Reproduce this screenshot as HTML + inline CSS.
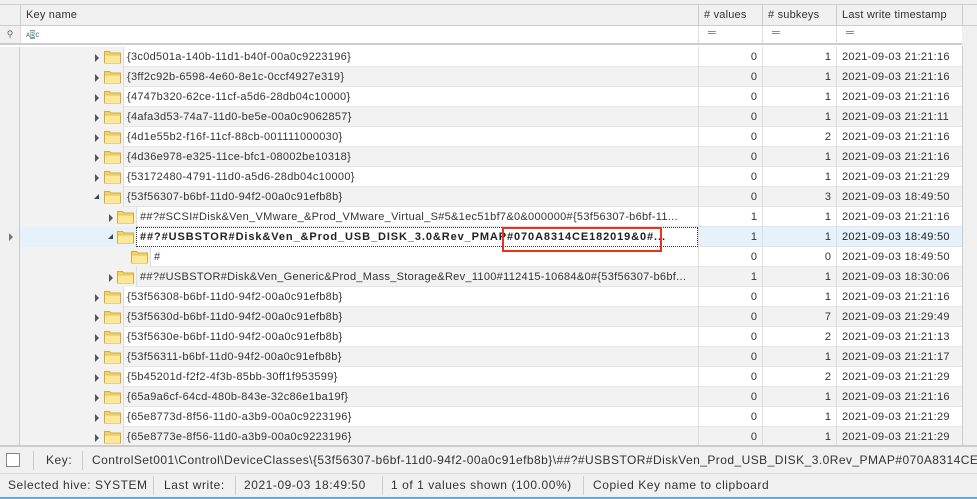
<!DOCTYPE html><html><head><style>
*{margin:0;padding:0;box-sizing:border-box}
body{width:977px;height:499px;overflow:hidden;background:#fff;font-family:"Liberation Sans",Tahoma,sans-serif;font-size:11px;color:#333;position:relative}
.a{position:absolute}
.hdr{top:4px;height:22px;background:#f0f0f0;border-top:1px solid #ccc;border-bottom:1px solid #ccc}
.hc{position:absolute;top:0;height:21px;line-height:21px;padding-left:5px;border-left:1px solid #ccc;color:#333;white-space:nowrap;letter-spacing:0.2px}
.flt{top:26px;height:19px;background:#fff;border-bottom:2px solid #ccc}
.fc{position:absolute;top:0;height:17px;border-left:1px solid #ddd;padding-left:9px;line-height:15px;color:#666}
.row{position:absolute;left:20px;width:942px;height:20px}
.cell{position:absolute;top:0;height:20px;line-height:20px;border-left:1px solid #ddd;border-bottom:1px solid #e4e4e4;white-space:nowrap;overflow:hidden}
.num{text-align:right;padding-right:5px}
.ts{padding-left:5px;letter-spacing:0.3px}
.arr{position:absolute;top:7px;width:0;height:0;border-top:4px solid transparent;border-bottom:4px solid transparent;border-left:4px solid #555}
.exp{position:absolute;top:7px;width:0;height:0;border-left:5px solid transparent;border-bottom:5px solid #444}
.fold{position:absolute;top:3px}
.name{position:absolute;top:0;height:20px;line-height:20px;padding-left:3px;border-left:1px solid #ddd;border-bottom:1px solid #e4e4e4;white-space:nowrap;overflow:hidden;letter-spacing:0.3px}
.sb{letter-spacing:0.55px}
</style></head><body>
<div class="a" style="left:0;top:0;width:977px;height:4px;background:#f0f0f0"></div>
<div class="a hdr" style="left:0;width:977px">
<div class="hc" style="left:20px;width:678px">Key name</div>
<div class="hc" style="left:698px;width:64px"># values</div>
<div class="hc" style="left:762px;width:74px"># subkeys</div>
<div class="hc" style="left:836px;width:126px">Last write timestamp</div>
<div class="hc" style="left:962px;width:15px"></div>
</div>
<div class="a flt" style="left:0;width:962px">
<div class="a" style="left:0;top:0;width:20px;height:17px;background:#f0f0f0;color:#666;font-size:9px;text-align:center;line-height:17px">⚲</div>
<div class="fc" style="left:20px;width:678px;padding-left:5px;font-size:8px;line-height:17px">ᴀ<span style="background:#7aa;color:#fff">B</span>c</div>
<div class="fc" style="left:698px;width:64px">═</div>
<div class="fc" style="left:762px;width:74px">═</div>
<div class="fc" style="left:836px;width:126px">═</div>
</div>
<div class="a" style="left:962px;top:26px;width:15px;height:20px;background:#f0f0f0"></div>
<div class="a" style="left:0;top:47px;width:20px;height:399px;background:#f0f0f0;border-right:1px solid #ccc"></div>
<div class="a" style="left:962px;top:46px;width:15px;height:400px;background:#f0f0f0;border-left:1px solid #ccc"></div>
<div id="rows"></div>
<div class="a arr" style="left:9px;top:233px;border-left-color:#777"></div>
<div class="a" style="left:0;top:445px;width:977px;height:2px;background:#ccc"></div>
<div class="a" style="left:0;top:447px;width:977px;height:27px;background:#f0f0f0;border-bottom:1px solid #ddd">
<div class="a" style="left:6px;top:6px;width:14px;height:14px;background:#fff;border:1px solid #888"></div>
<div class="a" style="left:33px;top:4px;width:1px;height:19px;background:#ccc"></div>
<div class="a sb" style="left:46px;top:0;line-height:26px;font-size:12px;color:#333">Key:</div>
<div class="a" style="left:82px;top:4px;width:1px;height:19px;background:#ccc"></div>
<div class="a" style="left:92px;top:0;line-height:26px;font-size:12px;color:#333;white-space:nowrap;letter-spacing:0.45px">ControlSet001\Control\DeviceClasses\{53f56307-b6bf-11d0-94f2-00a0c91efb8b}\##?#USBSTOR#DiskVen_Prod_USB_DISK_3.0Rev_PMAP#070A8314CE1</div>
</div>
<div class="a sb" style="left:0;top:474px;width:977px;height:23px;background:#f0f0f0;font-size:12px;line-height:22px;color:#333;white-space:nowrap">
<div class="a" style="left:8px">Selected hive: SYSTEM</div>
<div class="a" style="left:153px;top:2px;width:1px;height:19px;background:#ccc"></div>
<div class="a" style="left:164px">Last write:</div>
<div class="a" style="left:235px;top:2px;width:1px;height:19px;background:#ccc"></div>
<div class="a" style="left:244px">2021-09-03 18:49:50</div>
<div class="a" style="left:382px;top:2px;width:1px;height:19px;background:#ccc"></div>
<div class="a" style="left:391px">1 of 1 values shown (100.00%)</div>
<div class="a" style="left:583px;top:2px;width:1px;height:19px;background:#ccc"></div>
<div class="a" style="left:593px">Copied Key name to clipboard</div>
</div>
<div class="a" style="left:0;top:497px;width:977px;height:2px;background:#6aa8dc"></div>
<script>
var F='<svg width="17" height="14" viewBox="0 0 17 14"><path d="M0.5 1.5h5l1.5 1.5h9.5v10h-16z" fill="#f3d36b" stroke="#d4ab3a"/><path d="M1 5h15v8h-15z" fill="#fbe89a"/><path d="M1 5h15" stroke="#e6c458"/></svg>';
var D=[
[1,'{3c0d501a-140b-11d1-b40f-00a0c9223196}',0,1,'21:21:16'],
[1,'{3ff2c92b-6598-4e60-8e1c-0ccf4927e319}',0,1,'21:21:16'],
[1,'{4747b320-62ce-11cf-a5d6-28db04c10000}',0,1,'21:21:16'],
[1,'{4afa3d53-74a7-11d0-be5e-00a0c9062857}',0,1,'21:21:11'],
[1,'{4d1e55b2-f16f-11cf-88cb-001111000030}',0,2,'21:21:16'],
[1,'{4d36e978-e325-11ce-bfc1-08002be10318}',0,1,'21:21:16'],
[1,'{53172480-4791-11d0-a5d6-28db04c10000}',0,1,'21:21:29'],
[1,'{53f56307-b6bf-11d0-94f2-00a0c91efb8b}',0,3,'18:49:50','e'],
[2,'##?#SCSI#Disk&amp;Ven_VMware_&amp;Prod_VMware_Virtual_S#5&amp;1ec51bf7&amp;0&amp;000000#{53f56307-b6bf-11...',1,1,'21:21:16'],
[2,'##?#USBSTOR#Disk&amp;Ven_&amp;Prod_USB_DISK_3.0&amp;Rev_PMAP#070A8314CE182019&amp;0#...',1,1,'18:49:50','s'],
[3,'#',0,0,'18:49:50'],
[2,'##?#USBSTOR#Disk&amp;Ven_Generic&amp;Prod_Mass_Storage&amp;Rev_1100#112415-10684&amp;0#{53f56307-b6bf...',1,1,'18:30:06'],
[1,'{53f56308-b6bf-11d0-94f2-00a0c91efb8b}',0,1,'21:21:16'],
[1,'{53f5630d-b6bf-11d0-94f2-00a0c91efb8b}',0,7,'21:29:49'],
[1,'{53f5630e-b6bf-11d0-94f2-00a0c91efb8b}',0,2,'21:21:13'],
[1,'{53f56311-b6bf-11d0-94f2-00a0c91efb8b}',0,1,'21:21:17'],
[1,'{5b45201d-f2f2-4f3b-85bb-30ff1f953599}',0,2,'21:21:29'],
[1,'{65a9a6cf-64cd-480b-843e-32c86e1ba19f}',0,1,'21:21:16'],
[1,'{65e8773d-8f56-11d0-a3b9-00a0c9223196}',0,1,'21:21:29'],
[1,'{65e8773e-8f56-11d0-a3b9-00a0c9223196}',0,1,'21:21:29']];
var h='';
D.forEach(function(r,i){
var top=47+i*20,bg=i%2?'#f2f2f2':'#fff',sel=r[5]=='s';
if(sel)bg='#e5f1fb';
var L=r[0],ax=[0,75,89,0][L],fx=[0,84,97,111][L],tx=[0,103,116,130][L];
h+='<div class="row" style="top:'+top+'px;background:'+bg+'">';
h+='<div class="a" style="left:0;top:0;width:'+tx+'px;height:20px;background:'+(sel?'#e5f1fb':'#f2f2f2')+'"></div>';
if(L<3)h+=(r[5]=='e'||sel)?'<div class="exp" style="left:'+(ax-1)+'px"></div>':'<div class="arr" style="left:'+ax+'px"></div>';
h+='<div class="fold" style="left:'+fx+'px">'+F+'</div>';
h+='<div class="name" style="left:'+tx+'px;width:'+(678-tx)+'px;'+(sel?'background:#fff;border:1px dotted #333;font-weight:bold;color:#222;letter-spacing:0.9px;line-height:18px;':'')+'">'+r[1]+'</div>';
h+='<div class="cell num" style="left:678px;width:64px">'+r[2]+'</div>';
h+='<div class="cell num" style="left:742px;width:74px">'+r[3]+'</div>';
h+='<div class="cell ts" style="left:816px;width:126px;'+(sel?'color:#222':'')+'">2021-09-03 '+r[4]+'</div>';
h+='</div>';});
h+='<div class="a" style="left:502px;top:227px;width:160px;height:25px;border:2px solid #e8341c"></div>';
document.getElementById('rows').innerHTML=h;
</script>
</body></html>
